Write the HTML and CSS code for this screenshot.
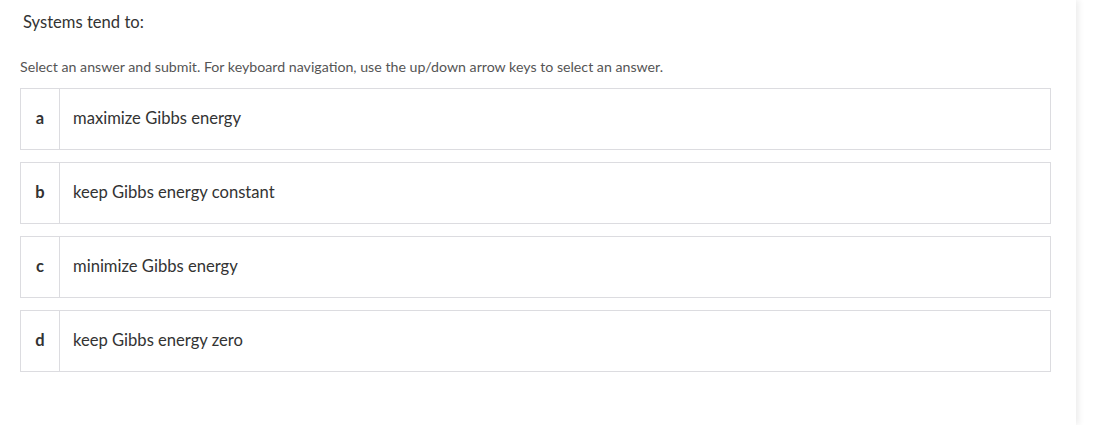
FILE: index.html
```html
<!DOCTYPE html>
<html>
<head>
<meta charset="utf-8">
<link rel="stylesheet" href="styles.css">
</head>
<body>
<div class="page">
  <h1 class="question">Systems tend to:</h1>
  <p class="hint">Select an answer and submit. For keyboard navigation, use the up/down arrow keys to select an answer.</p>
  <div class="answers">
    <div class="answer"><div class="letter">a</div><div class="text">maximize Gibbs energy</div></div>
    <div class="answer"><div class="letter">b</div><div class="text">keep Gibbs energy constant</div></div>
    <div class="answer"><div class="letter">c</div><div class="text">minimize Gibbs energy</div></div>
    <div class="answer"><div class="letter">d</div><div class="text">keep Gibbs energy zero</div></div>
  </div>
</div>
</body>
</html>
```
FILE: styles.css
```css
html, body {
  margin: 0;
  padding: 0;
  background: #fff;
  height: 100%;
}
body {
  font-family: "Source Sans Pro", Lato, "Open Sans", sans-serif;
  color: #333;
}
.page {
  width: 1076px;
  height: 100%;
  box-sizing: border-box;
  padding: 0 25px 0 20px;
  box-shadow: 3px 0 6px rgba(0, 0, 0, 0.07);
  overflow: hidden;
}
.question {
  margin: 0;
  padding: 12px 0 0 3px;
  font-size: 16.6px;
  font-weight: 400;
  line-height: 20px;
  color: #333;
}
.hint {
  margin: 0;
  padding-top: 26px;
  font-size: 14.2px;
  line-height: 18px;
  color: #555;
}
.answers {
  display: flex;
  flex-direction: column;
  gap: 12px;
  margin-top: 12px;
}
.answer {
  display: flex;
  height: 62px;
  box-sizing: border-box;
  border: 1px solid #dcdce0;
}
.letter {
  width: 38px;
  border-right: 1px solid #dcdce0;
  display: flex;
  align-items: center;
  justify-content: center;
  padding-bottom: 2px;
  font-size: 16.5px;
  font-weight: 700;
  color: #333;
}
.text {
  display: flex;
  align-items: center;
  padding-left: 13px;
  padding-bottom: 2px;
  font-size: 16.6px;
  color: #333;
}
```
